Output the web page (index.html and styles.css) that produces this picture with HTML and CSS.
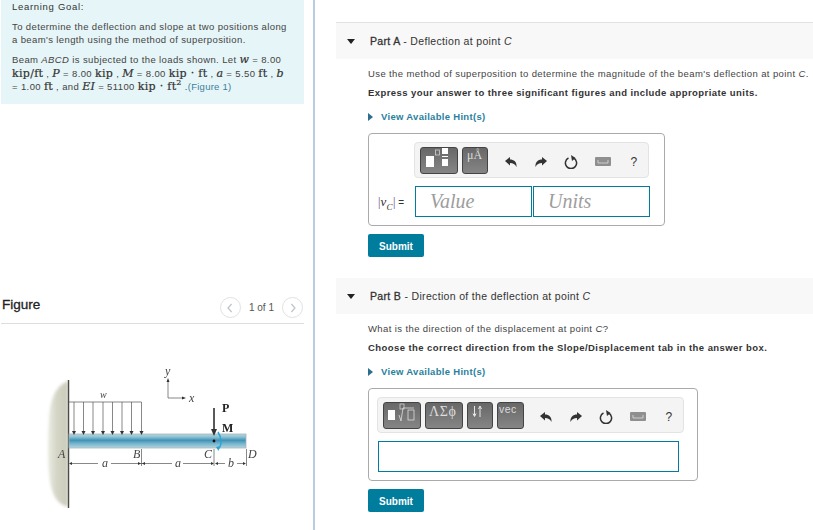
FILE: index.html
```html
<!DOCTYPE html>
<html lang="en">
<head>
<meta charset="utf-8">
<title>Learning Goal</title>
<link rel="stylesheet" href="styles.css">
</head>
<body>
<div class="page">
  <aside class="left">
    <section class="goal">
      <p class="goal-title">Learning Goal:</p>
      <p class="goal-text">To determine the deflection and slope at two positions along a beam's length using the method of superposition.</p>
      <p class="goal-text beam">Beam <i>ABCD</i> is subjected to the loads shown. Let <span class="m"><i>w</i></span> = 8.00<br><span class="m">kip/ft</span> , <span class="m"><i>P</i></span> = 8.00 <span class="m">kip</span> , <span class="m"><i>M</i></span> = 8.00 <span class="m">kip · ft</span> , <span class="m"><i>a</i></span> = 5.50 <span class="m">ft</span> , <span class="m"><i>b</i></span><br>= 1.00 <span class="m">ft</span> , and <span class="m"><i>EI</i></span> = 51100 <span class="m">kip · ft<sup>2</sup></span> .<span class="fig-link">(Figure 1)</span></p>
    </section>
    <header class="fig-head">
      <h2 class="fig-title">Figure</h2>
      <div class="pager">
        <span class="pager-btn"><svg viewBox="0 0 10 12" width="8" height="10"><path d="M7 1 2.500 6 7 11" class="chev"/></svg></span>
        <span class="pager-text">1 of 1</span>
        <span class="pager-btn"><svg viewBox="0 0 10 12" width="8" height="10"><path d="M3 1 7.500 6 3 11" class="chev"/></svg></span>
      </div>
    </header>
    <svg class="beam-fig" viewBox="40 360 230 150" width="230" height="150">
      <defs>
        <linearGradient id="bar" x1="0" y1="0" x2="0" y2="1">
          <stop offset="0" stop-color="#b7d5df"/><stop offset=".2" stop-color="#8fc3d6"/><stop offset=".45" stop-color="#3f93b5"/><stop offset=".65" stop-color="#6fb0c9"/><stop offset="1" stop-color="#b4d6e2"/>
        </linearGradient>
        <linearGradient id="wall" x1="0" y1="0" x2="1" y2="0">
          <stop offset="0" stop-color="#ecece4"/><stop offset=".4" stop-color="#d6d6c8"/><stop offset="1" stop-color="#cbcbba"/>
        </linearGradient>
      </defs>
      <path class="wall" d="M68 381C56 386 50 398 49 420C47 450 48 478 52 490C55 500 61 505 68 507Z" fill="url(#wall)"/>
      <path d="M68.500 380V508" class="ln dark"/>
      <rect x="69" y="434" width="177" height="14" fill="url(#bar)" stroke="#a8b4b8" stroke-width=".8"/>
      <path d="M69 402H141.500" class="ln thin"/>
      <path d="M74 402V432M83.500 402V432M93 402V432M103 402V432M112.500 402V432M122 402V432M131.500 402V432M141.500 402V432" class="ln thin"/>
      <path d="M72 431h4l-2 4zM81.500 431h4l-2 4zM91 431h4l-2 4zM101 431h4l-2 4zM110.500 431h4l-2 4zM120 431h4l-2 4zM129.500 431h4l-2 4zM139.500 431h4l-2 4z" class="fill-dark"/>
      <path d="M168 380V398H183" class="ln thin"/>
      <path d="M166.500 382l1.500-4 1.500 4zM182 396.500l4 1.500-4 1.500z" class="fill-dark"/>
      <path d="M214 408V431" class="ln heavy"/>
      <path d="M211 429h6l-3 7z" class="fill-dark"/>
      <circle cx="214" cy="441" r="1.400" fill="#111"/>
      <path d="M218 432C222 438 222 446 218 449" fill="none" stroke="#2aa5d6" stroke-width="1.500"/>
      <path d="M216 447l4-1-1.500 5z" fill="#2aa5d6"/>
      <path d="M141.500 449V466M214 449V466M246.500 449V466" class="ln thin"/>
      <path d="M70 463.500H98M111 463.500H172M183 463.500H212M218 463.500H225M237 463.500H245" class="ln thin"/>
      <path d="M69 463.500l3-1.500v3zM141 463.500l-3-1.500v3zM142 463.500l3-1.500v3zM214 463.500l-3-1.500v3zM215 463.500l3-1.500v3zM246 463.500l-3-1.500v3z" class="fill-dark"/>
      <text x="100" y="398" class="serif it t10">w</text>
      <text x="165" y="375" class="serif it t12">y</text>
      <text x="189" y="402" class="serif it t12">x</text>
      <text x="222" y="412" class="serif bold t12">P</text>
      <text x="222" y="432" class="serif bold t12">M</text>
      <text x="58" y="458" class="serif it t12">A</text>
      <text x="133" y="458" class="serif it t12">B</text>
      <text x="204" y="458" class="serif it t12">C</text>
      <text x="248" y="458" class="serif it t12">D</text>
      <text x="102" y="467" class="serif it t12">a</text>
      <text x="175" y="467" class="serif it t12">a</text>
      <text x="228" y="467" class="serif it t12">b</text>
    </svg>
  </aside>
  <main class="right">
    <section class="part part-a">
      <header class="part-head"><span class="tri"></span><h3 class="part-title"><b>Part A</b> - Deflection at point <i>C</i></h3></header>
      <div class="part-body">
        <p class="q">Use the method of superposition to determine the magnitude of the beam's deflection at point <i>C</i>.</p>
        <p class="q strong">Express your answer to three significant figures and include appropriate units.</p>
        <p class="hint"><span class="hint-tri"></span>View Available Hint(s)</p>
        <div class="answer answer-a">
          <div class="toolbar tb-a">
            <span class="tool tool-wide"><svg viewBox="0 0 38 26" width="38" height="26"><rect x="5" y="8" width="8" height="11" fill="#fff"/><rect x="14.500" y="2" width="4" height="5" fill="none" stroke="#ddd" stroke-width=".7"/><rect x="21" y="0" width="6" height="6" fill="#fff"/><rect x="21" y="8" width="6" height="1" fill="#fff"/><rect x="21" y="11" width="6" height="7" fill="#fff"/></svg></span>
            <span class="tool tool-mu">μÅ</span>
            <span class="actions actions-a">
              <svg viewBox="0 0 14 14" width="14" height="14"><path d="M1 6 6 2v2.500C10 4.500 13 7 12.500 12 11 9 9 8 6 8v2.500z" class="fill-dark"/></svg>
              <svg viewBox="0 0 14 14" width="14" height="14"><path d="M13 6 8 2v2.500C4 4.500 1 7 1.500 12 3 9 5 8 8 8v2.500z" class="fill-dark"/></svg>
              <svg viewBox="0 0 14 14" width="14" height="14"><path d="M9.500 3a5.600 5.600 0 1 1-5 0" fill="none" stroke="#333" stroke-width="1.500"/><path d="M7 0 11.500 3 8 6z" class="fill-dark"/></svg>
              <svg viewBox="0 0 16 10" width="16" height="10"><rect width="16" height="9" rx="1" fill="#8f8f8f"/><path d="M3 3v3h10V3" fill="none" stroke="#ddd" stroke-width=".8"/></svg>
              <span class="help">?</span>
            </span>
          </div>
          <div class="row-a">
            <span class="label"><span class="bar-l">|</span><i class="mv">v<sub>C</sub></i><span class="bar-r">|</span> =</span>
            <span class="inp inp-v">Value</span>
            <span class="inp inp-u">Units</span>
          </div>
        </div>
        <button class="submit">Submit</button>
      </div>
    </section>
    <section class="part part-b">
      <header class="part-head"><span class="tri"></span><h3 class="part-title"><b>Part B</b> - Direction of the deflection at point <i>C</i></h3></header>
      <div class="part-body">
        <p class="q">What is the direction of the displacement at point <i>C</i>?</p>
        <p class="q strong">Choose the correct direction from the Slope/Displacement tab in the answer box.</p>
        <p class="hint"><span class="hint-tri"></span>View Available Hint(s)</p>
        <div class="answer answer-b">
          <div class="toolbar tb-b">
            <span class="tool tool-root"><svg viewBox="0 0 38 26" width="38" height="26"><rect x="4" y="7" width="7" height="10" fill="#fff"/><rect x="16" y="1" width="4" height="5" fill="none" stroke="#ddd" stroke-width=".7"/><path d="M15 12l2 6 2-13h11" fill="none" stroke="#ddd" stroke-width=".8"/><rect x="24" y="7" width="6" height="10" fill="none" stroke="#ddd" stroke-width=".8"/></svg></span>
            <span class="tool tool-greek">ΛΣϕ</span>
            <span class="tool tool-arrows"><svg viewBox="0 0 26 26" width="26" height="26"><path d="M6.500 3V13M5 10.500 6.500 13.500 8 10.500M12 14V3.500M10.500 6 12 3 13.500 6" fill="none" stroke="#e6e6e6" stroke-width="1"/></svg></span>
            <span class="tool tool-vec">vec</span>
            <span class="actions actions-b">
              <svg viewBox="0 0 14 14" width="14" height="14"><path d="M1 6 6 2v2.500C10 4.500 13 7 12.500 12 11 9 9 8 6 8v2.500z" class="fill-dark"/></svg>
              <svg viewBox="0 0 14 14" width="14" height="14"><path d="M13 6 8 2v2.500C4 4.500 1 7 1.500 12 3 9 5 8 8 8v2.500z" class="fill-dark"/></svg>
              <svg viewBox="0 0 14 14" width="14" height="14"><path d="M9.500 3a5.600 5.600 0 1 1-5 0" fill="none" stroke="#333" stroke-width="1.500"/><path d="M7 0 11.500 3 8 6z" class="fill-dark"/></svg>
              <svg viewBox="0 0 16 10" width="16" height="10"><rect width="16" height="9" rx="1" fill="#8f8f8f"/><path d="M3 3v3h10V3" fill="none" stroke="#ddd" stroke-width=".8"/></svg>
              <span class="help">?</span>
            </span>
          </div>
          <div class="inp inp-wide"></div>
        </div>
        <button class="submit">Submit</button>
      </div>
    </section>
  </main>
</div>
</body>
</html>
```
FILE: styles.css
```css
* { box-sizing: border-box; }
html, body { margin: 0; padding: 0; }
body { width: 813px; height: 530px; overflow: hidden; background: #fff; font-family: "Liberation Sans", Arial, sans-serif; color: #333; }
p, h2, h3 { margin: 0; }
.page { display: flex; height: 530px; }

.left { width: 315px; flex: none; padding-left: 1px; border-right: 2px solid #b6cde2; }
.goal { width: 303px; height: 104px; background: #e6f5f7; padding: 1px 11px 0; font-size: 9.500px; letter-spacing: .38px; line-height: 12.500px; white-space: nowrap; }
.goal-title { height: 12px; margin-bottom: 8px; line-height: 12px; letter-spacing: .7px; }
.goal-text { color: #444; white-space: normal; }
.beam { margin-top: 7px; line-height: 13.500px; white-space: nowrap; }
.m { font-family: "DejaVu Serif", "Liberation Serif", serif; font-size: 11px; letter-spacing: .3px; color: #333; -webkit-text-stroke: .2px #333; }
.m sup { font-size: 8px; line-height: 0; }
.fig-link { color: #3d7f9c; letter-spacing: .25px; }

.fig-head { width: 303px; height: 38px; margin-top: 182px; border-bottom: 1px solid #ddd; display: flex; align-items: center; justify-content: space-between; padding: 0 1px 1px 1px; }
.fig-title { font-size: 13.500px; font-weight: 400; color: #222; -webkit-text-stroke: .3px #222; }
.pager { display: flex; align-items: center; gap: 8px; margin-top: 7px; }
.pager-btn { width: 21px; height: 21px; border: 1px solid #e1e1e1; border-radius: 50%; display: flex; align-items: center; justify-content: center; }
.chev { fill: none; stroke: #bcc4cb; stroke-width: 1.500; }
.pager-text { font-size: 10px; color: #555; }
.beam-fig { display: block; margin: 36px 0 0 39px; filter: blur(.35px); }
.wall { filter: blur(1.500px); }

.ln { stroke: #555; fill: none; }
.ln.dark { stroke: #4a4a4a; stroke-width: 1.400; }
.ln.thin { stroke-width: .7; }
.ln.heavy { stroke: #222; stroke-width: 1.500; }
.fill-dark { fill: #333; }
.serif { font-family: "Liberation Serif", serif; fill: #444; }
.it { font-style: italic; }
.bold { font-weight: 700; fill: #222; }
.t10 { font-size: 10px; }
.t12 { font-size: 12px; }

.right { flex: 1; min-width: 0; padding: 22px 0 0 21px; }
.part-head { height: 36px; display: flex; align-items: center; background: #f8f8f8; padding-left: 11px; }
.part-a .part-head { height: 37px; border-top: 1px solid #e2e2e2; }
.tri { width: 0; height: 0; border-left: 4.500px solid transparent; border-right: 4.500px solid transparent; border-top: 5px solid #222; margin-right: 15px; }
.part-title { font-size: 10.500px; font-weight: 400; letter-spacing: .33px; color: #333; }
.part-title b { font-weight: 400; -webkit-text-stroke: .3px #333; }
.part-body { padding: 8px 0 0 32px; }
.q { font-size: 9.500px; line-height: 13px; letter-spacing: .39px; color: #444; white-space: nowrap; }
.q.strong { margin-top: 6px; font-weight: 700; color: #333; letter-spacing: .43px; }
.hint { display: flex; align-items: center; margin-top: 11px; height: 13px; font-size: 9.500px; font-weight: 700; color: #2a7f9e; letter-spacing: .3px; }
.hint-tri { width: 0; height: 0; border-top: 4px solid transparent; border-bottom: 4px solid transparent; border-left: 5px solid #2c6f8c; margin-right: 8px; }

.answer { height: 93px; border: 1px solid #aaa; border-radius: 4px; margin-top: 10px; }
.answer-a { width: 297px; padding: 8px 0 0 45px; }
.answer-b { width: 330px; padding: 8px 0 0 8px; }
.toolbar { display: flex; align-items: center; height: 36px; background: #f4f4f4; border: 1px solid #e3e3e3; border-radius: 4px; padding-left: 5px; gap: 4px; }
.tb-a { width: 235px; }
.tb-b { width: 307px; }
.tool { display: block; height: 27px; border-radius: 3px; background: linear-gradient(#686868, #858585); border: 1px solid #444; color: #ddd; font-family: "Liberation Serif", serif; font-size: 12px; line-height: 15px; text-align: left; overflow: hidden; }
.tool svg { display: block; }
.tool-wide { width: 38px; }
.tool-mu { width: 26px; padding-left: 4px; }
.tool-root { width: 38px; }
.tool-greek { width: 38px; padding-left: 3px; font-size: 14px; line-height: 17px; letter-spacing: .6px; white-space: nowrap; }
.tool-arrows { width: 26px; }
.tool-vec { width: 27px; padding-left: 1px; font-family: "Liberation Sans", sans-serif; font-size: 10.500px; line-height: 12px; letter-spacing: .4px; }
.actions { display: flex; align-items: center; gap: 16.200px; margin-top: 4px; }
.actions-a { margin-left: 12px; }
.actions-b { margin-left: 11px; }
.help { font-size: 12px; color: #333; width: 14px; text-align: center; }

.row-a { display: flex; align-items: center; gap: 1px; margin-top: 8px; margin-left: -36px; }
.label { width: 36px; font-size: 10px; color: #333; white-space: nowrap; }
.bar-l, .bar-r { font-family: "Liberation Serif", serif; color: #5a3d8a; font-size: 12px; }
.mv { font-family: "Liberation Serif", serif; font-size: 13px; color: #333; letter-spacing: .4px; }
.mv sub { font-size: 9px; line-height: 0; }
.inp { display: block; height: 31px; border: 1px solid #007c9c; background: #fff; font-family: "Liberation Serif", serif; font-style: italic; font-size: 20px; line-height: 29px; color: #9d9d9d; padding-left: 14px; }
.inp-v { width: 117px; }
.inp-u { width: 117px; }
.inp-wide { width: 301px; margin-top: 8px; margin-left: 1px; }

.submit { display: block; width: 56px; height: 23px; margin-top: 8px; padding: 1px 0 0; border: 0; border-radius: 2px; background: #007c9c; color: #fff; font: 700 10px "Liberation Sans", sans-serif; }
.part-b { margin-top: 21px; }
```
